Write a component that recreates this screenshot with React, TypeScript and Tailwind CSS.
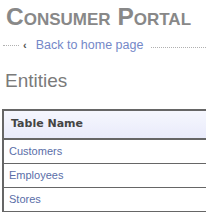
import React from 'react';

const rows = ['Customers', 'Employees', 'Stores'];

export default function App() {
    return (
        <div className="w-[206px] h-[219px] overflow-hidden bg-white font-['Liberation_Sans',sans-serif]">
            <h1 className="pl-[6px] pt-[3px] text-[24.5px] leading-[28px] font-bold text-[#888] [font-variant:small-caps] whitespace-nowrap">
                Consumer Portal
            </h1>
            <div className="flex items-center mt-[6px] h-[16px]">
                <div className="w-[16px] ml-[3px] border-b border-dotted border-[#b0b0b0]" />
                <span className="ml-[4px] text-[11px] font-bold text-[#505050]">&lsaquo;</span>
                <a className="ml-[9px] text-[12.5px] text-[#7488c8] whitespace-nowrap">Back to home page</a>
                <div className="flex-1 ml-[8px] mt-[4px] border-b border-dotted border-[#b0b0b0]" />
            </div>
            <h2 className="pl-[5px] mt-[17px] text-[19px] leading-[22px] text-[#7a7a7a]">Entities</h2>
            <table className="ml-[2px] mt-[17px] w-[220px] border-collapse">
                <thead>
                    <tr>
                        <th className="h-[29px] p-0 text-left pl-[7px] font-['DejaVu_Sans',sans-serif] text-[11px] font-bold text-[#444] bg-gradient-to-b from-[#f6f7fe] to-[#e9ebfb] border-2 border-[#666]">
                            Table Name
                        </th>
                    </tr>
                </thead>
                <tbody>
                    {rows.map(r => (
                        <tr key={r}>
                            <td className="h-[24px] p-0 pl-[5px] text-[11px] text-[#5a6ea8] border border-[#666] border-t-0 border-l-2">
                                {r}
                            </td>
                        </tr>
                    ))}
                </tbody>
            </table>
        </div>
    );
}
